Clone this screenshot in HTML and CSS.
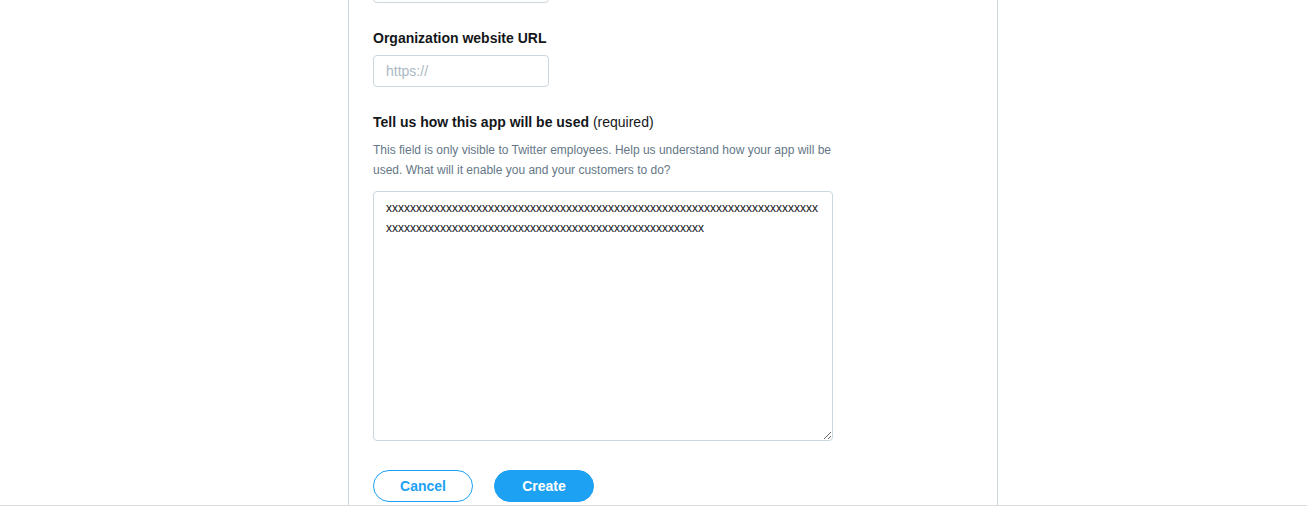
FILE: index.html
```html
<!DOCTYPE html>
<html lang="en">
<head>
<meta charset="utf-8">
<title>Create app</title>
<link rel="stylesheet" href="styles.css">
</head>
<body>
<div class="page">
  <main class="panel">
    <div class="field field-cut">
      <input class="text-input" type="text" aria-label="Previous field">
    </div>
    <div class="field">
      <label class="label" for="url">Organization website URL</label>
      <input class="text-input" id="url" type="text" placeholder="https://">
    </div>
    <div class="field">
      <label class="label" for="use">Tell us how this app will be used <span class="req">(required)</span></label>
      <p class="help">This field is only visible to Twitter employees. Help us understand how your app will be used. What will it enable you and your customers to do?</p>
      <textarea class="area" id="use">xxxxxxxxxxxxxxxxxxxxxxxxxxxxxxxxxxxxxxxxxxxxxxxxxxxxxxxxxxxxxxxxxxxxxxxxxxxxxxxxxxxxxxxxxxxxxxxxxxxxxxxxxxxxxxxxxxxxxxxxxxxxx</textarea>
    </div>
    <div class="actions">
      <button class="btn btn-outline" type="button">Cancel</button>
      <button class="btn btn-fill" type="button">Create</button>
    </div>
  </main>
</div>
</body>
</html>
```
FILE: styles.css
```css
html, body {
  margin: 0;
  padding: 0;
  background: #fff;
}
body {
  height: 507px;
  overflow: hidden;
  font-family: "Liberation Sans", Arial, sans-serif;
  color: #14171a;
}
.page {
  padding-left: 348px;
  height: 505px;
  border-bottom: 1px solid #dcdcdc;
  overflow: hidden;
}
.panel {
  width: 600px;
  height: 560px;
  border-left: 1px solid #ccd6dd;
  border-right: 1px solid #ccd6dd;
  padding: 0 24px;
  margin-top: -29px;
}
.field {
  display: flex;
  flex-direction: column;
  align-items: flex-start;
  margin-bottom: 24px;
}
.label {
  font-size: 14px;
  font-weight: bold;
  line-height: 20px;
  padding-top: 1px;
  margin-bottom: 7px;
}
.req {
  font-weight: normal;
}
.text-input {
  box-sizing: border-box;
  width: 176px;
  height: 32px;
  border: 1px solid #ccd6dd;
  border-radius: 4px;
  padding: 0 12px;
  font-family: inherit;
  font-size: 14px;
  color: #14171a;
  margin: 0;
}
.text-input::placeholder {
  color: #aab8c2;
}
.help {
  margin: 1px 0 11px;
  width: 460px;
  font-size: 12px;
  line-height: 20px;
  color: #657786;
}
.area {
  box-sizing: border-box;
  width: 460px;
  height: 250px;
  border: 1px solid #ccd6dd;
  border-radius: 4px;
  padding: 6px 12px;
  font-family: inherit;
  font-size: 12px;
  line-height: 20px;
  color: #14171a;
  word-break: break-all;
  margin: 0;
}
.actions {
  display: flex;
  gap: 21px;
  margin-top: 29px;
}
.btn {
  box-sizing: border-box;
  width: 100px;
  height: 32px;
  border-radius: 999px;
  font-family: inherit;
  font-size: 14px;
  font-weight: bold;
  cursor: pointer;
}
.btn-outline {
  background: #fff;
  border: 1px solid #1da1f2;
  color: #1da1f2;
}
.btn-fill {
  background: #1da1f2;
  border: 1px solid #1da1f2;
  color: #fff;
}
```
